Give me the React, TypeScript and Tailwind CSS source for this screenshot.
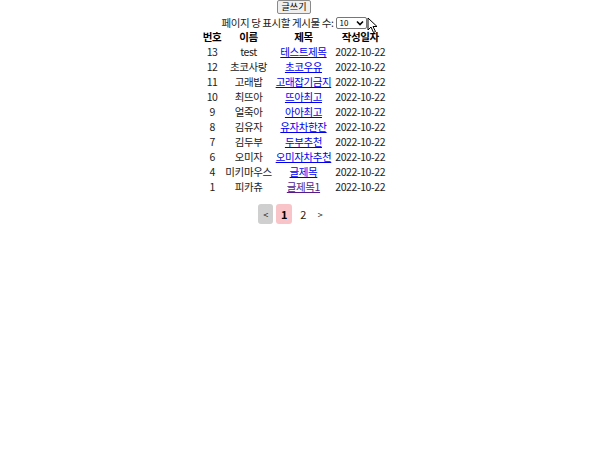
const rows = [
  { no: 13, name: 'test', title: '테스트제목', date: '2022-10-22' },
  { no: 12, name: '초코사랑', title: '초코우유', date: '2022-10-22' },
  { no: 11, name: '고래밥', title: '고래잡기금지', date: '2022-10-22' },
  { no: 10, name: '최뜨아', title: '뜨아최고', date: '2022-10-22' },
  { no: 9, name: '얼죽아', title: '아아최고', date: '2022-10-22' },
  { no: 8, name: '김유자', title: '유자차한잔', date: '2022-10-22' },
  { no: 7, name: '김두부', title: '두부추천', date: '2022-10-22' },
  { no: 6, name: '오미자', title: '오미자차추천', date: '2022-10-22' },
  { no: 4, name: '미키마우스', title: '글제목', date: '2022-10-22' },
  { no: 1, name: '피카츄', title: '글제목1', date: '2022-10-22', visited: true },
];

export default function App() {
  return (
    <div className="relative min-h-[454px] bg-white pr-[12px] text-center text-[10.5px] leading-[15px] tracking-[-0.4px] text-[#222] font-['Noto_Sans_CJK_KR','Noto_Sans',sans-serif]">
      <button className="mx-auto block h-[14px] w-[34px] text-[9px] leading-[12px] tracking-normal bg-[#efefef] border border-[#8a8a8a] rounded-[2px] text-black">
        글쓰기
      </button>
      <div className="mt-[2px] flex h-[13px] items-center justify-center gap-[2px]">
        <span className="whitespace-pre">페이지 당 표시할 게시물 수:</span>
        <span className="flex h-[12px] w-[31px] items-center justify-between border border-[#767676] rounded-[2px] pl-[3px] pr-[2px] text-[8px] leading-[10px] tracking-normal text-black">
          10
          <svg width="8" height="6" viewBox="0 0 8 6"><path d="M1 1.5 L4 4.5 L7 1.5" fill="none" stroke="#000" strokeWidth="1.6" /></svg>
        </span>
      </div>
      <table className="mx-auto border-separate border-spacing-x-[2px] border-spacing-y-0">
        <thead>
          <tr>
            <th className="px-[1px] h-[15px] font-bold text-black">번호</th>
            <th className="px-[1px] font-bold text-black">이름</th>
            <th className="px-[1px] font-bold text-black">제목</th>
            <th className="px-[1px] font-bold text-black">작성일자</th>
          </tr>
        </thead>
        <tbody>
          {rows.map((r) => (
            <tr key={r.no}>
              <td className="px-[1px] h-[15px]">{r.no}</td>
              <td className="px-[1px]">{r.name}</td>
              <td className="px-[1px]">
                <a href="#" className={r.visited ? 'underline text-[#551a8b]' : 'underline text-[#0000ee]'}>
                  {r.title}
                </a>
              </td>
              <td className="px-[1px]">{r.date}</td>
            </tr>
          ))}
        </tbody>
      </table>
      <div className="mt-[10px] flex justify-center items-center gap-[3px] pr-[4px]">
        <span className="flex h-[20px] w-[15px] items-center justify-center rounded-[3px] bg-[#cfcfcf] text-[9px]">&lt;</span>
        <span className="flex h-[20px] w-[16px] items-center justify-center rounded-[3px] bg-[#f8c4c8] font-bold text-[11px] text-black">1</span>
        <span className="flex h-[20px] w-[16px] items-center justify-center text-[11px]">2</span>
        <span className="flex h-[20px] w-[12px] items-center justify-center text-[9px]">&gt;</span>
      </div>
      <svg className="absolute left-[367px] top-[17px]" width="11" height="17" viewBox="0 0 11 17">
        <path d="M1 1 L1 13 L4 10 L6.5 15.5 L8.5 14.5 L6 9.5 L10 9.5 Z" fill="#fff" stroke="#000" strokeWidth="1" strokeLinejoin="round" />
      </svg>
    </div>
  );
}
